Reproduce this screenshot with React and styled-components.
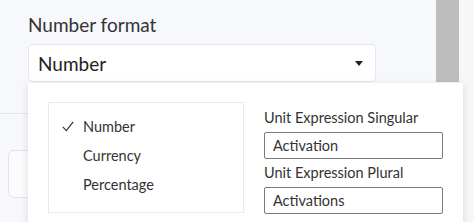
import React from "react";
import styled, { createGlobalStyle } from "styled-components";

const Global = createGlobalStyle`
  html, body { margin: 0; padding: 0; background: #f7f8fb; }
  body { font-family: Lato, "Liberation Sans", sans-serif; color: #333; }
`;

const Frame = styled.div`
  position: relative;
  width: 474px;
  height: 222px;
  overflow: hidden;
  display: flex;
  background: #f7f8fb;
`;

const Main = styled.div`
  width: 436px;
  display: flex;
  flex-direction: column;
`;

const Section = styled.div`
  padding: 12px 60px 0 28px;
  display: flex;
  flex-direction: column;
`;

const FieldLabel = styled.div`
  font-size: 19px;
  line-height: 26px;
  color: #333;
  margin-bottom: 6px;
`;

const Select = styled.div`
  height: 36px;
  background: #fff;
  border: 1px solid #e6e7ea;
  border-radius: 5px;
  display: flex;
  align-items: center;
  justify-content: space-between;
  padding: 0 12px 0 9px;
  font-size: 19px;
  color: #222;
`;

const Caret = styled.span`
  width: 0;
  height: 0;
  border-left: 4.5px solid transparent;
  border-right: 4.5px solid transparent;
  border-top: 5px solid #222;
`;

const Divider = styled.div`
  margin-top: 31px;
  height: 1px;
  background: #e4e6ea;
`;

const Card = styled.div`
  margin: 36px 0 0 8px;
  height: 46px;
  border: 1px solid #e3e4e8;
  border-radius: 6px;
  background: #fbfbfd;
`;

const Scrollbar = styled.div`
  width: 23px;
  height: 82px;
  background: #bdbdbd;
`;

const Strip = styled.div`
  flex: 1;
  background: #f6f7f9;
`;

const Popup = styled.div`
  position: absolute;
  left: 28px;
  top: 83px;
  width: 435px;
  height: 160px;
  background: #fff;
  box-shadow: 0 2px 8px rgba(0, 0, 0, 0.12);
  display: flex;
  gap: 20px;
  padding: 19px 0 0 20px;
  box-sizing: border-box;
`;

const ListBox = styled.div`
  width: 196px;
  height: 111px;
  box-sizing: border-box;
  border: 1px solid #e8e9ec;
  padding-top: 9px;
  display: flex;
  flex-direction: column;
`;

const Option = styled.div`
  display: flex;
  align-items: center;
  height: 29px;
  font-size: 14.5px;
  color: #333;
`;

const CheckSlot = styled.span`
  width: 34px;
  display: flex;
  justify-content: flex-end;
  padding-right: 9px;
  box-sizing: border-box;
`;

const Fields = styled.div`
  display: flex;
  flex-direction: column;
  width: 179px;
  padding-top: 6px;
`;

const InputLabel = styled.div`
  font-size: 14.5px;
  line-height: 20px;
  color: #333;
  margin-bottom: 4px;
`;

const Input = styled.div`
  height: 27px;
  box-sizing: border-box;
  border: 1px solid #7a7a7a;
  border-radius: 2px;
  padding: 0 8px;
  display: flex;
  align-items: center;
  font-size: 14.5px;
  color: #333;
  margin-bottom: ${(p) => p.$mb || 0}px;
`;

const Check = () => (
  <svg width="12" height="11" viewBox="0 0 12 11" fill="none">
    <path d="M0.8 5.8 L4.3 9.6 L11.2 0.8" stroke="#333" strokeWidth="1.2" />
  </svg>
);

const options = ["Number", "Currency", "Percentage"];

export default function App() {
  return (
    <Frame>
      <Global />
      <Main>
        <Section>
          <FieldLabel>Number format</FieldLabel>
          <Select>
            <span>Number</span>
            <Caret />
          </Select>
        </Section>
        <Divider />
        <Card />
      </Main>
      <Scrollbar />
      <Strip />
      <Popup>
        <ListBox>
          {options.map((o, i) => (
            <Option key={o}>
              <CheckSlot>{i === 0 && <Check />}</CheckSlot>
              {o}
            </Option>
          ))}
        </ListBox>
        <Fields>
          <InputLabel>Unit Expression Singular</InputLabel>
          <Input $mb={4}>Activation</Input>
          <InputLabel>Unit Expression Plural</InputLabel>
          <Input>Activations</Input>
        </Fields>
      </Popup>
    </Frame>
  );
}
